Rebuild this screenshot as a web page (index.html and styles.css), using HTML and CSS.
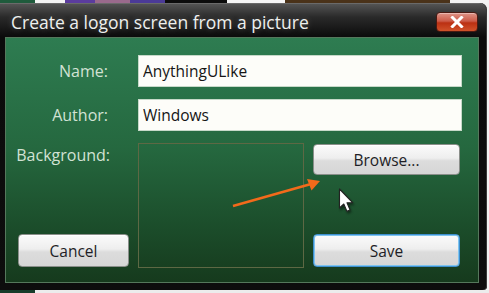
FILE: index.html
```html
<!DOCTYPE html>
<html lang="en">
<head>
    <meta charset="UTF-8">
    <meta name="viewport" content="width=device-width, initial-scale=1.0">
    <title>Create a logon screen from a picture</title>
    <link rel="stylesheet" href="styles.css">
</head>
<body>
    <div class="screen">
        <div class="wallpaper">
            <span class="wp wp-green"></span>
            <span class="wp wp-white"></span>
            <span class="wp wp-purple"></span>
            <span class="wp wp-mauve"></span>
            <span class="wp wp-violet"></span>
            <span class="wp wp-black"></span>
            <span class="wp wp-white2"></span>
            <span class="wp wp-brown"></span>
            <span class="wp wp-black2"></span>
        </div>

        <div class="window">
            <div class="titlebar">
                <span class="title">Create a logon screen from a picture</span>
                <button class="close-btn" type="button" aria-label="Close">
                    <svg width="14" height="12" viewBox="0 0 14 12">
                        <path d="M2.5 1.5 L11.5 10.5 M11.5 1.5 L2.5 10.5" stroke="#fff" stroke-width="3" stroke-linecap="square" fill="none"/>
                    </svg>
                </button>
            </div>

            <div class="client">
                <form class="logon-form">
                    <label class="field-label" for="name">Name:</label>
                    <input class="field-input" id="name" type="text" value="AnythingULike">

                    <label class="field-label" for="author">Author:</label>
                    <input class="field-input" id="author" type="text" value="Windows">

                    <span class="field-label bg-label">Background:</span>
                    <div class="preview"></div>
                    <button class="btn browse-btn" type="button">Browse...</button>

                    <button class="btn cancel-btn" type="button">Cancel</button>
                    <button class="btn save-btn" type="submit">Save</button>
                </form>
            </div>
        </div>

        <div class="taskbar">
            <span class="tb-green"></span>
            <span class="tb-light"></span>
        </div>

        <!-- annotation drawn over the dialog -->
        <svg class="arrow" width="100" height="40" viewBox="0 0 100 40">
            <path d="M2 30 L80 8" stroke="#f26a1b" stroke-width="2.6" fill="none"/>
            <path d="M89 5 L76 3 L80.5 14.5 Z" fill="#f26a1b"/>
        </svg>

        <svg class="cursor" width="18" height="27" viewBox="0 0 18 27">
            <path d="M1.5 1 L1.5 20 L5.8 16 L8.9 23.2 L12 21.9 L9 14.8 L14.8 14.8 Z" fill="#fff" stroke="#222" stroke-width="1.1" stroke-linejoin="round"/>
        </svg>
    </div>
</body>
</html>
```

FILE: styles.css
```css
* {
    margin: 0;
    padding: 0;
    box-sizing: border-box;
}

body {
    font-family: 'Open Sans', 'Noto Sans', sans-serif;
    background: #f4f4f4;
    overflow: hidden;
}

.screen {
    width: 489px;
    height: 293px;
    position: relative;
    display: flex;
    flex-direction: column;
    background: #f2f2f2;
}

/* desktop wallpaper peeking out above the window */
.wallpaper {
    height: 3px;
    display: flex;
    flex-shrink: 0;
}

.wp { height: 100%; }
.wp-green  { width: 35px;  background: #1f5b3c; }
.wp-white  { width: 30px;  background: #f4f4f4; }
.wp-purple { width: 30px;  background: #5b3c9e; }
.wp-mauve  { width: 35px;  background: #9a6a8c; }
.wp-violet { width: 35px;  background: #4b3a98; }
.wp-black  { width: 62px;  background: #0c0c0c; }
.wp-white2 { width: 58px;  background: #f6f6f6; }
.wp-brown  { width: 165px; background: #4a3219; }
.wp-black2 { flex: 1;      background: #f4f4f4; }

.window {
    flex: 1;
    margin-right: 2px;
    display: flex;
    flex-direction: column;
    background: linear-gradient(180deg, #575757 0px, #2a2a2a 14px, #0b0b0b 34px, #0d0d0d 100%);
    border-radius: 0 7px 4px 0;
    box-shadow: inset -1px 0 0 #3a3a3a, inset 0 1px 0 #6a6a6a;
}

.titlebar {
    height: 34px;
    flex-shrink: 0;
    display: flex;
    align-items: center;
    justify-content: space-between;
    padding: 4px 9px 0 11px;
}

.title {
    color: #eef0ee;
    font-size: 17.5px;
    text-shadow: 0 0 6px rgba(255, 255, 255, 0.25);
}

.close-btn {
    width: 42px;
    height: 20px;
    display: flex;
    align-items: center;
    justify-content: center;
    border: 1px solid #4a1a12;
    border-radius: 4px;
    background: linear-gradient(180deg, #de9488 0%, #cc5b48 45%, #bb3012 55%, #d0522a 100%);
    box-shadow: inset 0 1px 0 rgba(255, 255, 255, 0.35);
}

.client {
    flex: 1;
    margin: 0 8px 7px 5px;
    border: 1px solid #55785c;
    background: linear-gradient(180deg, #2e7c51 0%, #25683f 45%, #1c4f2c 75%, #163a1d 100%);
    padding: 17px 16px 15px 12px;
}

.logon-form {
    height: 100%;
    display: grid;
    grid-template-columns: 111px 166px 149px;
    grid-template-rows: 32px 32px 32px 1fr;
    column-gap: 9px;
    row-gap: 12px;
}

.field-label {
    color: #d2e2d4;
    font-size: 16px;
    text-align: right;
    padding-right: 21px;
    align-self: center;
    white-space: nowrap;
}

.bg-label {
    grid-row: 3;
    grid-column: 1;
    padding-right: 19px;
    margin-left: -10px;
    align-self: start;
    margin-top: 1px;
}

.field-input {
    grid-column: 2 / 4;
    height: 32px;
    border: 1px solid #c7d9c9;
    background: #fdfdf9;
    font-family: inherit;
    font-size: 15.5px;
    color: #151515;
    padding: 0 4px;
    outline: none;
}

.preview {
    grid-column: 2;
    grid-row: 3 / 5;
    border: 1px solid #5d6844;
    margin-bottom: -1px;
}

.btn {
    font-family: inherit;
    font-size: 15.5px;
    color: #1e1e26;
    border: 1px solid #8a8e8a;
    border-radius: 4px;
    background: linear-gradient(180deg, #fbfbfb 0%, #eeeeee 45%, #dcdcdc 55%, #d6d6d6 100%);
    box-shadow: inset 0 1px 0 #ffffff;
    height: 33px;
}

.browse-btn {
    grid-column: 3;
    grid-row: 3;
    width: 147px;
    height: 31px;
    margin-top: 1px;
}

.cancel-btn {
    grid-column: 1;
    grid-row: 4;
    align-self: end;
}

.save-btn {
    grid-column: 3;
    grid-row: 4;
    align-self: end;
    width: 147px;
    border-color: #3d8fd0;
    box-shadow: inset 0 0 0 1px #7fc4ee, inset 0 1px 0 #ffffff;
}

/* taskbar strip under the window */
.taskbar {
    height: 3px;
    display: flex;
    flex-shrink: 0;
}

.tb-green { width: 35px; background: #173c2a; }
.tb-light { flex: 1; background: #ececec; }

.arrow {
    position: absolute;
    left: 231px;
    top: 176px;
}

.cursor {
    position: absolute;
    left: 338px;
    top: 188px;
    filter: drop-shadow(1px 2px 1px rgba(0, 0, 0, 0.45));
}
```
